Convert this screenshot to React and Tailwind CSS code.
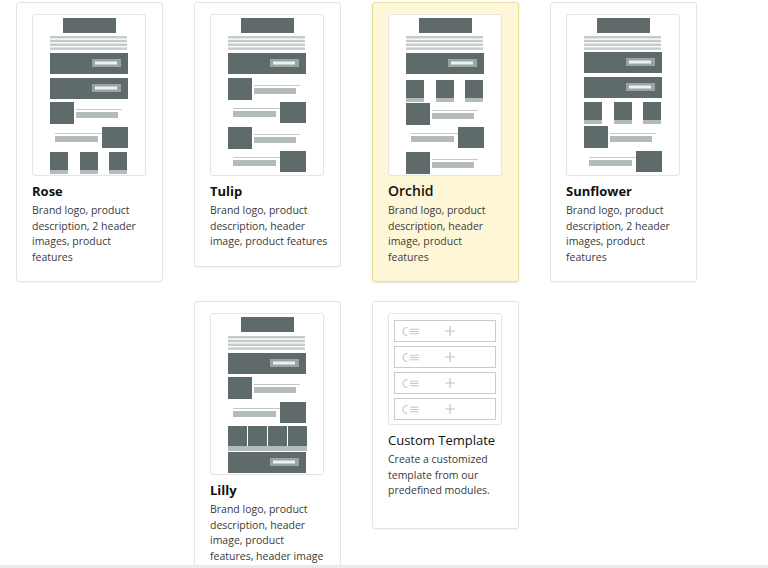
import React from "react";

const DARK = "#5f6b6a";
const LIGHT = "#b3bcbb";
const LINE = "#c4cbca";

const Header = () => <rect x="31" y="4" width="53" height="15" fill={DARK} />;

const Lines = ({ y }) => (
  <g>
    {[0, 3.8, 7.6, 11.4].map((d) => (
      <rect key={d} x="18" y={y + d} width="77" height="2.4" fill={LINE} />
    ))}
  </g>
);

const Banner = ({ y }) => (
  <g>
    <rect x="18" y={y} width="78" height="21" fill={DARK} />
    <rect x="60" y={y + 6} width="29" height="8" fill="#9aa4a3" />
    <rect x="63" y={y + 8.5} width="22" height="3" fill="#eef1f1" />
  </g>
);

const Left = ({ y }) => (
  <g>
    <rect x="18" y={y} width="24" height="22" fill={DARK} />
    <rect x="44" y={y + 7} width="46" height="1" fill={LINE} />
    <rect x="44" y={y + 10} width="42" height="6" fill={LIGHT} />
  </g>
);

const Right = ({ y }) => (
  <g>
    <rect x="23" y={y + 6} width="47" height="1" fill={LINE} />
    <rect x="23" y={y + 9} width="43" height="6" fill={LIGHT} />
    <rect x="70" y={y} width="26" height="21" fill={DARK} />
  </g>
);

const Triple = ({ y }) => (
  <g>
    {[18, 48, 77].map((x) => (
      <g key={x}>
        <rect x={x} y={y} width="18" height="18" fill={DARK} />
        <rect x={x} y={y + 18} width="18" height="4" fill={LIGHT} />
      </g>
    ))}
  </g>
);

const Quad = ({ y }) => (
  <g>
    {[18, 38, 58, 78].map((x) => (
      <rect key={x} x={x} y={y} width="19" height="20" fill={DARK} />
    ))}
    <rect x="18" y={y + 20} width="79" height="5" fill={LIGHT} />
  </g>
);

const Thumb = ({ children }) => (
  <div className="w-[114px] h-[162px] border border-[#e4e4e4] rounded-[3px] bg-white overflow-hidden">
    <svg width="112" height="160" viewBox="1 1 112 160">
      {children}
    </svg>
  </div>
);

const DragIcon = () => (
  <svg width="18" height="11" viewBox="0 0 18 11">
    <path d="M6.5 1.5 A4.5 4 0 1 0 6.5 9.5" fill="none" stroke="#c4c4c4" strokeWidth="1.2" />
    <path d="M9 3.2h8.5M9 5.5h8.5M9 7.8h8.5" stroke="#c4c4c4" strokeWidth="1.1" />
  </svg>
);

const PlusIcon = () => (
  <svg width="10" height="10" viewBox="0 0 10 10">
    <path d="M5 0v10M0 5h10" stroke="#c4c4c4" strokeWidth="1.2" />
  </svg>
);

const CustomThumb = () => (
  <div className="w-[114px] h-[112px] border border-[#e4e4e4] rounded-[3px] bg-white flex flex-col gap-[4px] px-[5px] pt-[6px]">
    {[0, 1, 2, 3].map((i) => (
      <div key={i} className="h-[22px] border-[1.5px] border-[#cbcbcb] flex items-center pl-[6px] gap-[26px]">
        <DragIcon />
        <PlusIcon />
      </div>
    ))}
  </div>
);

const Card = ({ title, lines, thumb, selected, weight = "font-bold", big, pb = "pb-[16px]" }) => (
  <div
    className={`w-[147px] rounded-[3px] border px-[15px] pt-[11px] ${pb} ${
      selected ? "bg-[#fdf7d7] border-[#ecdf9c] shadow-[0_1px_2px_rgba(180,160,60,0.25)]" : "bg-white border-[#e3e3e3] shadow-[0_1px_1px_rgba(0,0,0,0.04)]"
    }`}
  >
    {thumb}
    <div className={`mt-[6px] leading-[18px] text-[#111] ${weight} ${big ? "text-[14px]" : "text-[13px]"}`}>
      {title}
    </div>
    <div className="mt-[3px] text-[10.5px] leading-[15.5px] text-[#3a3a3a]">
      {lines.map((l) => (
        <div key={l} className="whitespace-nowrap">
          {l}
        </div>
      ))}
    </div>
  </div>
);

export default function App() {
  return (
    <div className="h-[568px] overflow-hidden bg-white flex flex-col font-['Open_Sans',sans-serif]">
      <div className="flex-1 overflow-hidden">
        <div className="w-[713px] pt-[2px] flex flex-wrap justify-center items-start gap-x-[31px] gap-y-[19px]">
          <Card
            title="Rose"
            lines={["Brand logo, product", "description, 2 header", "images, product", "features"]}
            thumb={
              <Thumb>
                <Header />
                <Lines y={22} />
                <Banner y={39} />
                <Banner y={64} />
                <Left y={88} />
                <Right y={113} />
                <Triple y={138} />
              </Thumb>
            }
          />
          <Card
            title="Tulip"
            lines={["Brand logo, product", "description, header", "image, product features"]}
            thumb={
              <Thumb>
                <Header />
                <Lines y={22} />
                <Banner y={39} />
                <Left y={64} />
                <Right y={88} />
                <Left y={113} />
                <Right y={137} />
              </Thumb>
            }
          />
          <Card
            title="Orchid"
            selected
            weight="font-semibold"
            big
            lines={["Brand logo, product", "description, header", "image, product", "features"]}
            thumb={
              <Thumb>
                <Header />
                <Lines y={22} />
                <Banner y={39} />
                <Triple y={66} />
                <Left y={89} />
                <Right y={113} />
                <Left y={138} />
              </Thumb>
            }
          />
          <Card
            title="Sunflower"
            lines={["Brand logo, product", "description, 2 header", "images, product", "features"]}
            thumb={
              <Thumb>
                <Header />
                <Lines y={22} />
                <Banner y={38} />
                <Banner y={63} />
                <Triple y={88} />
                <Left y={112} />
                <Right y={137} />
              </Thumb>
            }
          />
          <Card
            title="Lilly"
            lines={["Brand logo, product", "description, header", "image, product", "features, header image"]}
            thumb={
              <Thumb>
                <Header />
                <Lines y={23} />
                <Banner y={40} />
                <Left y={64} />
                <Right y={89} />
                <Quad y={113} />
                <Banner y={139} />
              </Thumb>
            }
          />
          <Card
            title="Custom Template"
            weight="font-medium"
            pb="pb-[29px]"
            lines={["Create a customized", "template from our", "predefined modules."]}
            thumb={<CustomThumb />}
          />
        </div>
      </div>
      <div className="h-[3px] bg-[#ebebeb]" />
    </div>
  );
}
